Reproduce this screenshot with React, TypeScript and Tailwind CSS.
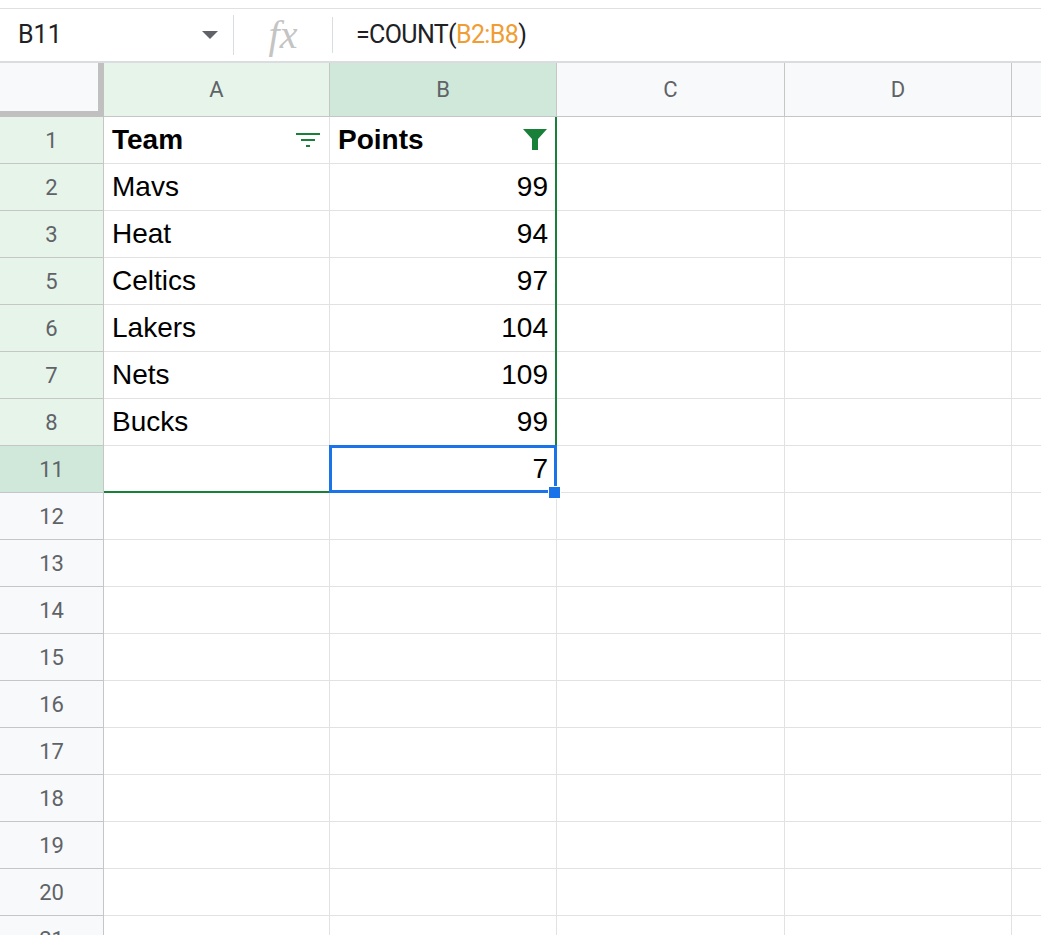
const cols = [
  { l: 'A', w: 226 },
  { l: 'B', w: 227 },
  { l: 'C', w: 228 },
  { l: 'D', w: 227 },
  { l: 'E', w: 100 },
];

const rows: { n: string; a?: string; b?: string; head?: boolean }[] = [
  { n: '1', a: 'Team', b: 'Points', head: true },
  { n: '2', a: 'Mavs', b: '99' },
  { n: '3', a: 'Heat', b: '94' },
  { n: '5', a: 'Celtics', b: '97' },
  { n: '6', a: 'Lakers', b: '104' },
  { n: '7', a: 'Nets', b: '109' },
  { n: '8', a: 'Bucks', b: '99' },
  { n: '11', b: '7' },
  ...['12', '13', '14', '15', '16', '17', '18', '19', '20', '21'].map((n) => ({ n })),
];

function FilterLines() {
  return (
    <svg width="26" height="16" viewBox="0 0 26 16">
      <rect x="1" y="1" width="24" height="2" fill="#188038" />
      <rect x="6" y="7" width="14" height="2" fill="#188038" />
      <rect x="11" y="13" width="4" height="2" fill="#188038" />
    </svg>
  );
}

function Funnel() {
  return (
    <svg width="26" height="24" viewBox="0 0 26 24">
      <path d="M1 1h24l-9 10v11h-6V11z" fill="#188038" />
    </svg>
  );
}

export default function App() {
  return (
    <div className="w-[1041px] h-[935px] overflow-hidden bg-white" style={{ fontFamily: 'Roboto, "Liberation Sans", sans-serif' }}>
      <div className="h-[9px] border-b border-[#e0e0e0]" />
      <div className="h-[54px] flex items-center border-b-2 border-[#dadce0]">
        <div className="w-[233px] flex items-center justify-between pl-[18px] pr-[14px] text-[25px] text-[#202124]">
          <span>B11</span>
          <svg width="18" height="10" viewBox="0 0 18 10"><path d="M1 1h16L9 9z" fill="#5f6368" /></svg>
        </div>
        <div className="h-[40px] w-px bg-[#dadce0]" />
        <div className="w-[98px] flex justify-center text-[40px] italic text-[#c4c4c4]" style={{ fontFamily: '"Liberation Serif", serif' }}>fx</div>
        <div className="h-[36px] w-px bg-[#dadce0]" />
        <div className="pl-[23px] text-[25px] text-[#202124] tracking-tight">
          =COUNT(<span className="text-[#f09d33]">B2:B8</span>)
        </div>
      </div>
      <div className="relative">
        <div className="flex h-[54px]">
          <div className="w-[104px] shrink-0 bg-[#f8f9fa] border-r-[6px] border-b-[6px] border-[#c0c0c0] box-border" />
          {cols.map((c, i) => (
            <div
              key={c.l}
              style={{ width: c.w }}
              className={`shrink-0 flex items-center justify-center text-[22px] text-[#5f6368] border-r border-b border-[#c4c7c5] ${
                i === 0 ? 'bg-[#e6f4ea]' : i === 1 ? 'bg-[#cfe8d9]' : 'bg-[#f8f9fa]'
              }`}
            >
              {c.l}
            </div>
          ))}
        </div>
        {rows.map((r, ri) => (
          <div key={r.n} className="flex h-[47px]">
            <div
              className={`w-[104px] shrink-0 flex items-center justify-center text-[22px] text-[#5f6368] border-r border-b border-[#c4c7c5] ${
                r.n === '11' ? 'bg-[#cfe8d9]' : ri < 7 ? 'bg-[#e6f4ea]' : 'bg-[#f8f9fa]'
              }`}
            >
              {r.n}
            </div>
            {cols.map((c, i) => (
              <div
                key={c.l}
                style={{ width: c.w, fontFamily: '"Liberation Sans", Arial, sans-serif' }}
                className={`shrink-0 flex items-center px-[8px] text-[28px] text-black border-r border-b border-[#e2e2e2] ${
                  r.head ? 'font-bold' : ''
                } ${i === 1 ? (r.head ? 'justify-between' : 'justify-end') : ''}`}
              >
                {i === 0 && r.a && (
                  <div className="flex-1 flex items-center justify-between">
                    <span>{r.a}</span>
                    {r.head && <FilterLines />}
                  </div>
                )}
                {i === 1 && r.b && (
                  r.head ? (
                    <>
                      <span>{r.b}</span>
                      <Funnel />
                    </>
                  ) : (
                    <span>{r.b}</span>
                  )
                )}
              </div>
            ))}
          </div>
        ))}
        <div className="absolute left-[555px] top-[54px] w-[2px] h-[376px] bg-[#188038]" />
        <div className="absolute left-[104px] top-[428px] w-[453px] h-[2px] bg-[#188038]" />
        <div className="absolute left-[329px] top-[382px] w-[228px] h-[48px] border-[3px] border-[#1a73e8]" />
        <div className="absolute left-[548px] top-[423px] w-[13px] h-[13px] bg-[#1a73e8] border border-white" />
      </div>
    </div>
  );
}
